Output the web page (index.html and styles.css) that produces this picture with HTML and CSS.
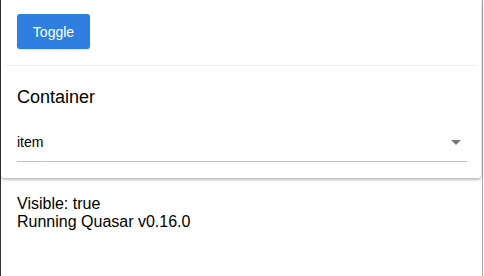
FILE: index.html
```html
<!DOCTYPE html>
<html>
<head>
<meta charset="utf-8">
<link rel="stylesheet" href="styles.css">
</head>
<body>
<div class="frame">
  <div class="card">
    <div class="top">
      <button class="btn">Toggle</button>
    </div>
    <div class="sep"></div>
    <div class="body">
      <div class="title">Container</div>
      <div class="field">
        <span class="value">item</span>
        <span class="arrow"></span>
      </div>
    </div>
  </div>
  <div class="info">
    <div>Visible: true</div>
    <div>Running Quasar v0.16.0</div>
  </div>
</div>
</body>
</html>
```
FILE: styles.css
```css
html, body {
  margin: 0;
  padding: 0;
  background: #fff;
}
body {
  font-family: "Liberation Sans", Arial, sans-serif;
  color: #000;
}
.frame {
  box-sizing: border-box;
  width: 483px;
  height: 276px;
  border-left: 1px solid #333;
  border-right: 1px solid #a8a8a8;
  display: flex;
  flex-direction: column;
}
.card {
  margin-right: 1px;
  background: #fff;
  border-radius: 0 0 3px 3px;
  box-shadow: 0 1px 4px rgba(0,0,0,0.22), 0 2px 2px rgba(0,0,0,0.12);
}
.top {
  padding: 14px 16px 16px;
  display: flex;
}
.btn {
  width: 73px;
  height: 35px;
  border: none;
  border-radius: 3px;
  background: #2f7fe0;
  color: #fff;
  font-family: "Liberation Sans", Arial, sans-serif;
  font-size: 14px;
  padding: 0;
  box-shadow: 0 1px 2px rgba(0,0,0,0.12);
}
.sep {
  height: 1px;
  background: #efefef;
  margin: 0 3px 0 5px;
}
.body {
  padding: 21px 14px 16px 16px;
}
.title {
  font-size: 18px;
  line-height: 20px;
}
.field {
  margin-top: 27px;
  padding-bottom: 11px;
  border-bottom: 1px solid #c2c2c2;
  display: flex;
  align-items: center;
  justify-content: space-between;
}
.value {
  font-size: 14px;
  line-height: 16px;
}
.arrow {
  width: 0;
  height: 0;
  border-left: 5px solid transparent;
  border-right: 5px solid transparent;
  border-top: 5px solid #777;
  margin-right: 6px;
}
.info {
  padding: 17px 16px 0;
  font-size: 16px;
  line-height: 18px;
}
```
